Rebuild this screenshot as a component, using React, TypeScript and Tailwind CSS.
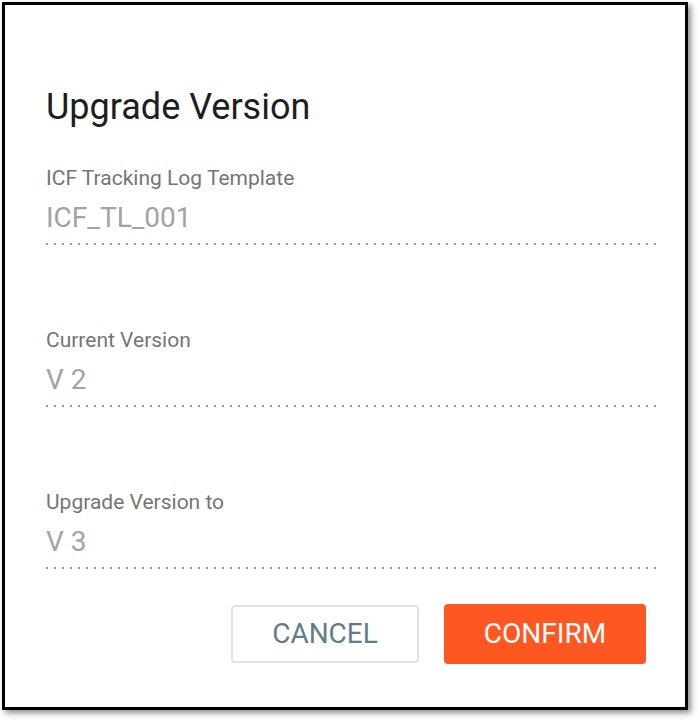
import React from "react";

const Field = ({ label, value, first }: { label: string; value: string; first?: boolean }) => (
  <div className={`flex flex-col ${first ? "mt-[43px]" : "mt-[85px]"}`}>
    <div className="text-[21px] leading-[21px] text-[#757575]">{label}</div>
    <div className="mt-[15px] text-[28px] leading-[28px] text-[#a3a3a3]">{value}</div>
    <div className="mt-[11px] h-[2px] w-full bg-[image:linear-gradient(to_right,#9a9a9a_0,#9a9a9a_2px,transparent_2px)] bg-[length:8px_2px] bg-repeat-x" />
  </div>
);

export default function App() {
  return (
    <div className="w-[698px] h-[720px] bg-white p-[2px]" style={{ fontFamily: "Roboto, 'Noto Sans', sans-serif" }}>
      <div className="w-[686px] h-[708px] border-[3px] border-black bg-white shadow-[3px_3px_6px_rgba(0,0,0,0.45)] pt-[84px] pl-[41px] pr-[29px] flex flex-col">
        <div className="text-[36px] leading-[36px] text-[#1e1e1e]">Upgrade Version</div>
        <Field first label="ICF Tracking Log Template" value="ICF_TL_001" />
        <Field label="Current Version" value="V 2" />
        <Field label="Upgrade Version to" value="V 3" />
        <div className="mt-[35px] mr-[10px] flex justify-end items-start gap-[25px]">
          <button className="mt-[1px] w-[188px] h-[58px] rounded-[4px] border-2 border-[#e2e2e2] bg-white text-[28px] text-[#607d8b] uppercase">
            Cancel
          </button>
          <button className="w-[202px] h-[60px] rounded-[4px] bg-[#ff5722] text-[28px] text-white uppercase">
            Confirm
          </button>
        </div>
      </div>
    </div>
  );
}
